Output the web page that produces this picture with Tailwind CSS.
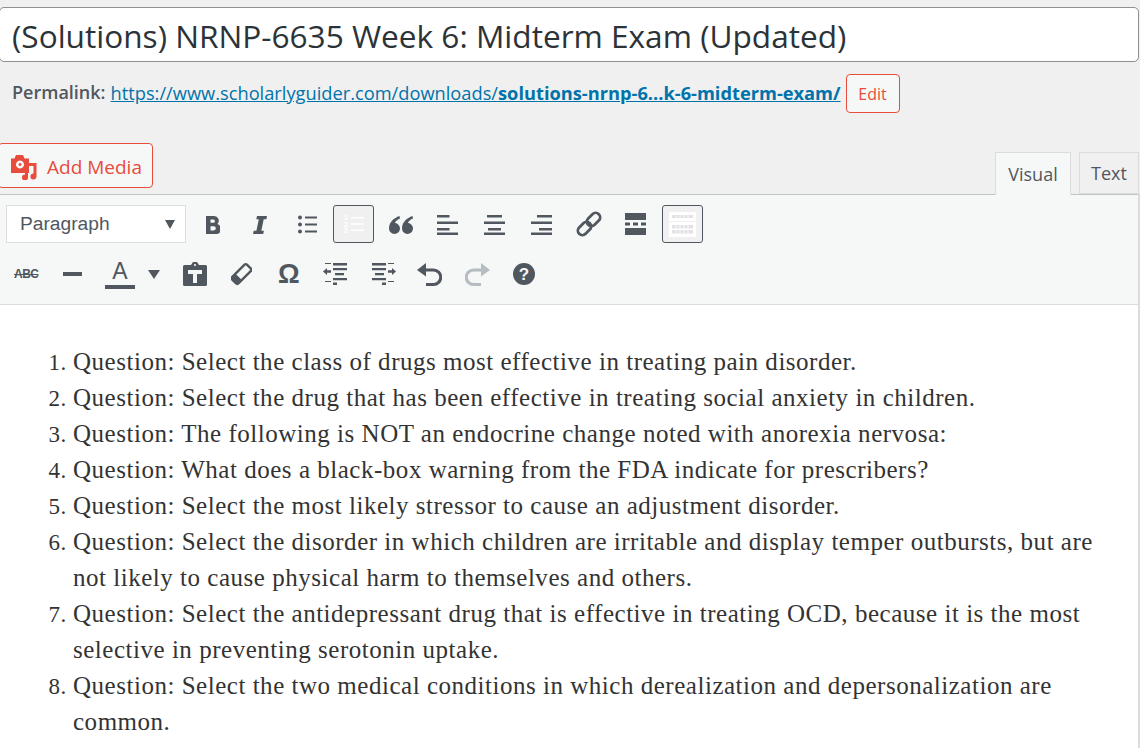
<!DOCTYPE html>
<html lang="en">
<head>
  <meta charset="UTF-8" />
  <title>Edit download</title>
  <script src="https://cdn.jsdelivr.net/npm/@tailwindcss/browser@4"></script>
</head>
<body class="bg-[#f0f0f1] h-[748px] w-[1140px] overflow-hidden font-['Open_Sans','Noto_Sans',sans-serif] text-[#50575e]">
  <div class="pt-[7px]">
    <div class="h-[55px] ml-[-1px] mr-px bg-white border border-[#8c8f94] rounded-[5px] pl-[12px] pt-[2px] flex items-center text-[31.6px] text-[#2c3338] whitespace-nowrap">(Solutions) NRNP-6635 Week 6: Midterm Exam (Updated)</div>
    <div class="h-[39px] mt-[12px] pl-[12px] flex items-center text-[18.25px] whitespace-nowrap">
      <strong class="font-semibold mr-[5px] mb-[2px] text-[18px]">Permalink:</strong>
      <a class="text-[#0073aa] underline mb-[2px]" href="#">https://www.scholarlyguider.com/downloads/<b class="font-bold">solutions-nrnp-6...k-6-midterm-exam/</b></a>
      <button class="ml-[5px] h-[39px] w-[54px] border border-[#e74c3c] rounded-[4px] bg-[#f6f7f7] text-[#e74c3c] text-[16px]">Edit</button>
    </div>
  </div>

  <div class="mt-[29px] h-[52px] flex items-end justify-between">
    <button class="mb-[6px] ml-[-2px] h-[45px] w-[155px] border border-[#e74c3c] rounded-[4px] bg-[#f6f7f7] text-[#e74c3c] text-[19px] flex items-center pl-[12px] pt-[3px] gap-[10px]">
      <svg class="flex-none" width="26" height="25" viewBox="0 0 26 25" fill="#e74c3c"><path fill-rule="evenodd" d="M0 3.500h3.500L5 0h7l1.500 3.500H18V18H0zM9 5.500a4 4 0 1 0 .01 0zM9 8a1.500 1.500 0 1 1-.01 0z"/><path d="M18 8h7.500v14h-.1a3 3 0 1 1-2.900-3.500V11H18zM14 17h3v5.500a3 3 0 1 1-3-3z"/></svg>
      Add Media
    </button>
    <div class="flex gap-[8px] pr-px text-[18px]">
      <div class="h-[43px] w-[76px] mb-[-1px] border border-[#dcdcde] border-b-0 bg-[#f6f7f7] flex items-center justify-center">Visual</div>
      <div class="h-[42px] w-[60px] border border-[#dcdcde] bg-[#f0f0f1] flex items-center justify-center">Text</div>
    </div>
  </div>

  <div class="border-r-2 border-[#dcdcde]">
    <div class="h-[111px] bg-[#f6f7f7] border-y border-t-[#c3c4c7] border-b-[#dcdcde] pt-[10px] pl-[6px]">
      <div class="h-[38px] flex items-center">
        <div class="w-[180px] h-[38px] bg-white border border-[#dcdcde] flex items-center justify-between pl-[13px] pr-[10px] text-[19.2px] font-['Liberation_Sans',sans-serif]">Paragraph
          <span class="w-0 h-0 border-x-[5.5px] border-x-transparent border-t-[9px] border-t-[#50575e]"></span>
        </div>
        <svg class="ml-[20px] mt-[2px] flex-none" width="14" height="18" viewBox="0 0 14 18" fill="#50575e"><path fill-rule="evenodd" d="M0 0h8a4.700 4.700 0 0 1 3.400 8A5.200 5.200 0 0 1 8.500 18H0zM4.500 3.500v3.300h2.800a1.650 1.650 0 0 0 0-3.300zM4.500 10.200v4.300h3.200a2.150 2.150 0 0 0 0-4.300z"/></svg>
        <svg class="ml-[33px] mt-[2px] flex-none" width="14" height="18" viewBox="0 0 14 18" fill="#50575e"><path d="M4 0h10l-.7 3.200h-2.600L8.300 14.800h2.600L10.200 18H0l.7-3.200h2.700L5.800 3.200H3.300z"/></svg>
        <svg class="ml-[31px] mt-[1px] flex-none" width="19" height="19" viewBox="0 0 19 19" fill="#50575e"><circle cx="2" cy="2.500" r="2"/><circle cx="2" cy="9.500" r="2"/><circle cx="2" cy="16.500" r="2"/><path d="M7 1.600h12v1.800H7zM7 8.600h12v1.800H7zM7 15.600h12v1.800H7z"/></svg>
        <div class="ml-[16px] flex-none w-[41px] h-[38px] border border-[#50575e] rounded-[3px] bg-[#f0f0f1] flex items-center justify-center">
          <svg width="22" height="22" viewBox="0 0 22 22" fill="#fff"><path d="M8 4h13v1.500H8zM8 10.300h13v1.500H8zM8 16.600h13v1.500H8z"/><text x="1" y="7" font-size="7" font-weight="bold" font-family="Liberation Sans">1</text><text x="1" y="13.500" font-size="7" font-weight="bold" font-family="Liberation Sans">2</text><text x="1" y="20" font-size="7" font-weight="bold" font-family="Liberation Sans">3</text></svg>
        </div>
        <svg class="ml-[15px] mt-[1px] flex-none" width="24" height="18" viewBox="0 0 24 18" fill="#50575e"><path d="M10.500 0C5 2 0 6 0 12.500a5.500 5.500 0 1 0 6-5.500C6.500 5 8.500 3.500 11 2.500zM23.500 0C18 2 13 6 13 12.500a5.500 5.500 0 1 0 6-5.500C19.500 5 21.500 3.500 24 2.500z"/></svg>
        <svg class="ml-[24px] flex-none" width="21" height="21" viewBox="0 0 21 21" fill="#50575e"><path d="M0 1h12.500v2.400H0zM0 7.500h21v2.400H0zM0 14h12.500v2.400H0zM0 18.600h21V21H0z"/></svg>
        <svg class="ml-[26px] flex-none" width="21" height="21" viewBox="0 0 21 21" fill="#50575e"><path d="M3 1h15v2.400H3zM0 7.500h21v2.400H0zM4 14h13v2.400H4zM0 18.600h21V21H0z"/></svg>
        <svg class="ml-[26px] flex-none" width="21" height="21" viewBox="0 0 21 21" fill="#50575e"><path d="M6 1h15v2.400H6zM0 7.500h21v2.400H0zM8 14h13v2.400H8zM0 18.600h21V21H0z"/></svg>
        <svg class="ml-[24px] flex-none" width="26" height="26" viewBox="0 0 26 26" fill="none" stroke="#50575e" stroke-width="2.800"><rect x="13" y="1" width="9" height="15" rx="4.500" transform="rotate(45 17.500 8.500)"/><rect x="4" y="10" width="9" height="15" rx="4.500" transform="rotate(45 8.500 17.500)"/></svg>
        <svg class="ml-[23px] flex-none" width="21" height="22" viewBox="0 0 21 22" fill="#50575e"><path d="M0 0h21v7H0zM0 15h21v7H0zM0 9.500h5v3H0zM8 9.500h5v3H8zM16 9.500h5v3h-5z"/></svg>
        <div class="ml-[16px] flex-none w-[41px] h-[38px] border border-[#50575e] rounded-[3px] bg-[#f0f0f1] flex items-center justify-center">
          <svg width="27" height="25" viewBox="0 0 27 25"><path d="M0 0h27v9H0zM0 10h27v15H0z" fill="#fff"/><path d="M3 3h21v3H3zM3 13h21v3.500H3zM3 18h21v3.500H3z" fill="#e2e2e4"/><path d="M7 3v3M11 3v3M15 3v3M19 3v3M7 13v8.500M11 13v8.500M15 13v8.500M19 13v8.500" stroke="#fff" stroke-width=".8"/></svg>
        </div>
      </div>
      <div class="h-[38px] mt-[12px] flex items-center">
        <span class="ml-[8px] flex-none w-[24px] text-[12px] font-bold line-through font-['Liberation_Sans',sans-serif] tracking-[-0.5px]">ABC</span>
        <svg class="ml-[25px] flex-none" width="19" height="4" viewBox="0 0 19 4" fill="#50575e"><path d="M0 0h19v4H0z"/></svg>
        <div class="ml-[23px] flex-none w-[30px] h-[30px] flex flex-col items-center justify-between">
          <span class="text-[23px] leading-[25px] font-['Liberation_Sans',sans-serif]">A</span>
          <span class="w-[30px] h-[4px] bg-[#50575e]"></span>
        </div>
        <span class="ml-[13px] flex-none w-0 h-0 border-x-[6px] border-x-transparent border-t-[9px] border-t-[#50575e]"></span>
        <svg class="ml-[23px] flex-none" width="24" height="24" viewBox="0 0 24 24" fill="#50575e"><path fill-rule="evenodd" d="M1.500 3H8l2-3h4l2 3h6.500A1.500 1.500 0 0 1 24 4.500v18a1.500 1.500 0 0 1-1.500 1.500h-21A1.500 1.500 0 0 1 0 22.500v-18A1.500 1.500 0 0 1 1.500 3zM12 2a1 1 0 1 0 .01 0zM5 8v4h5v9h4v-9h5V8z"/></svg>
        <svg class="ml-[24px] flex-none" width="21" height="24" viewBox="0 0 21 24"><g transform="rotate(45 10.500 12)"><rect x="6" y="1.500" width="9" height="21" rx="2" fill="#f6f7f7" stroke="#50575e" stroke-width="2.400"/><path d="M6 16h9v5.500a1 1 0 0 1-1 1H7a1 1 0 0 1-1-1z" fill="#50575e"/></g></svg>
        <span class="ml-[26px] flex-none w-[21px] text-center text-[27px] leading-[30px] font-bold font-['Liberation_Sans',sans-serif]">Ω</span>
        <svg class="ml-[24px] flex-none" width="24" height="22" viewBox="0 0 24 22" fill="#50575e"><path d="M2 0h6v1H2zM10 0h14v2.500H10zM10 5h14v2.300H10zM12 10h9v2.300h-9zM10 15h14v2.300H10zM2 18h6v1H2zM10 19.500h4V22h-4zM0 8.500L4 5v2.300h4v2.400H4V12z"/></svg>
        <svg class="ml-[25px] flex-none" width="24" height="22" viewBox="0 0 24 22" fill="#50575e"><path d="M16 0h6v1h-6zM0 0h14v2.500H0zM0 5h14v2.300H0zM3 10h9v2.300H3zM0 15h14v2.300H0zM16 18h6v1h-6zM10 19.500h4V22h-4zM24 8.500L20 5v2.300h-4v2.400h4V12z"/></svg>
        <svg class="ml-[21px] flex-none" width="25" height="23" viewBox="0 0 25 23" fill="none" stroke="#50575e" stroke-width="3"><path d="M6 7h10.500a7 7 0 0 1 0 14.500H9"/><path d="M9 0L0 7l9 6.500z" fill="#50575e" stroke="none"/></svg>
        <svg class="ml-[23px] flex-none" width="25" height="23" viewBox="0 0 25 23" fill="none" stroke="#b5bcc2" stroke-width="3"><path d="M19 7H8.500a7 7 0 0 0 0 14.500H16"/><path d="M16 0l9 7-9 6.500z" fill="#b5bcc2" stroke="none"/></svg>
        <svg class="ml-[23px] flex-none" width="22" height="22" viewBox="0 0 22 22"><circle cx="11" cy="11" r="11" fill="#50575e"/><text x="11" y="17" text-anchor="middle" font-size="17" font-weight="bold" fill="#f6f7f7" font-family="Liberation Sans">?</text></svg>
      </div>
    </div>

    <div class="bg-white h-[444px] pt-[39px] overflow-hidden">
      <ol class="list-decimal pl-[73px] pr-[24px] text-[25px] tracking-[0.52px] leading-[36px] text-[#333] font-['Liberation_Serif',serif] marker:text-[23px]">
        <li>Question: Select the class of drugs most effective in treating pain disorder.</li>
        <li>Question: Select the drug that has been effective in treating social anxiety in children.</li>
        <li>Question: The following is NOT an endocrine change noted with anorexia nervosa:</li>
        <li>Question: What does a black-box warning from the FDA indicate for prescribers?</li>
        <li>Question: Select the most likely stressor to cause an adjustment disorder.</li>
        <li>Question: Select the disorder in which children are irritable and display temper outbursts, but are not likely to cause physical harm to themselves and others.</li>
        <li>Question: Select the antidepressant drug that is effective in treating OCD, because it is the most selective in preventing serotonin uptake.</li>
        <li>Question: Select the two medical conditions in which derealization and depersonalization are common.</li>
        <li>Question: Select the activity in which children are most likely to suffer a fracture injury.</li>
      </ol>
    </div>
  </div>
</body>
</html>
